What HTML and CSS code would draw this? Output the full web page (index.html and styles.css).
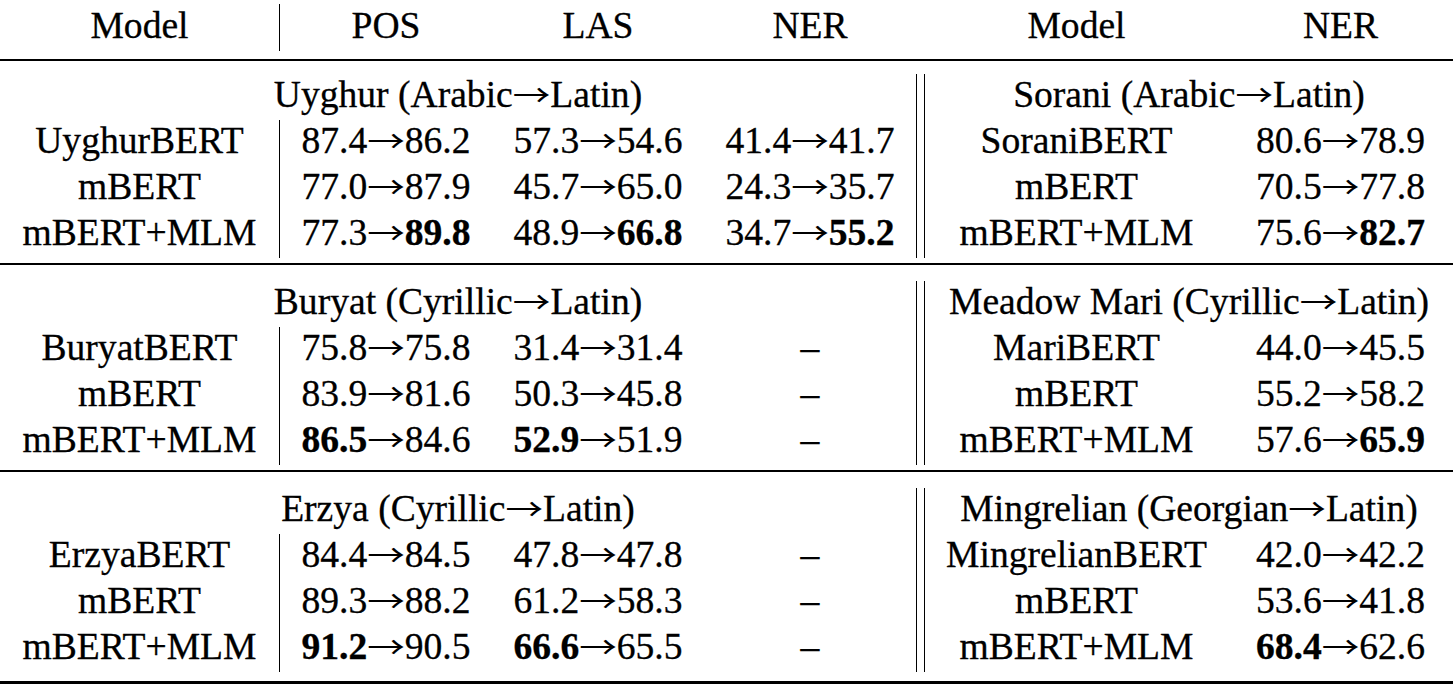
FILE: index.html
```html
<!DOCTYPE html>
<html lang="en">
<head>
    <meta charset="UTF-8">
    <meta name="viewport" content="width=device-width, initial-scale=1.0">
    <title>Transliteration results</title>
    <link rel="stylesheet" href="styles.css">
</head>
<body>
    <table class="results">
        <colgroup>
            <col class="c-model">
            <col class="c-score">
            <col class="c-score">
            <col class="c-score">
            <col class="c-sep">
            <col class="c-model2">
            <col class="c-ner">
        </colgroup>
        <thead>
            <tr>
                <th class="bar">Model</th>
                <th>POS</th>
                <th>LAS</th>
                <th>NER</th>
                <th></th>
                <th>Model</th>
                <th>NER</th>
            </tr>
        </thead>
        <tbody>
            <tr class="rule first"><td colspan="7"><div class="line"></div></td></tr>

            <!-- Uyghur / Sorani -->
            <tr class="lang">
                <td colspan="4">Uyghur (Arabic<span class="arr">→</span>Latin)</td>
                <td class="double"></td>
                <td colspan="2">Sorani (Arabic<span class="arr">→</span>Latin)</td>
            </tr>
            <tr>
                <td class="bar">UyghurBERT</td>
                <td>87.4<span class="arr">→</span>86.2</td>
                <td>57.3<span class="arr">→</span>54.6</td>
                <td>41.4<span class="arr">→</span>41.7</td>
                <td class="double"></td>
                <td>SoraniBERT</td>
                <td>80.6<span class="arr">→</span>78.9</td>
            </tr>
            <tr>
                <td class="bar">mBERT</td>
                <td>77.0<span class="arr">→</span>87.9</td>
                <td>45.7<span class="arr">→</span>65.0</td>
                <td>24.3<span class="arr">→</span>35.7</td>
                <td class="double"></td>
                <td>mBERT</td>
                <td>70.5<span class="arr">→</span>77.8</td>
            </tr>
            <tr>
                <td class="bar">mBERT+MLM</td>
                <td>77.3<span class="arr">→</span><b>89.8</b></td>
                <td>48.9<span class="arr">→</span><b>66.8</b></td>
                <td>34.7<span class="arr">→</span><b>55.2</b></td>
                <td class="double"></td>
                <td>mBERT+MLM</td>
                <td>75.6<span class="arr">→</span><b>82.7</b></td>
            </tr>

            <tr class="rule"><td colspan="7"><div class="line"></div></td></tr>

            <!-- Buryat / Meadow Mari -->
            <tr class="lang">
                <td colspan="4">Buryat (Cyrillic<span class="arr">→</span>Latin)</td>
                <td class="double"></td>
                <td colspan="2">Meadow Mari (Cyrillic<span class="arr">→</span>Latin)</td>
            </tr>
            <tr>
                <td class="bar">BuryatBERT</td>
                <td>75.8<span class="arr">→</span>75.8</td>
                <td>31.4<span class="arr">→</span>31.4</td>
                <td>–</td>
                <td class="double"></td>
                <td>MariBERT</td>
                <td>44.0<span class="arr">→</span>45.5</td>
            </tr>
            <tr>
                <td class="bar">mBERT</td>
                <td>83.9<span class="arr">→</span>81.6</td>
                <td>50.3<span class="arr">→</span>45.8</td>
                <td>–</td>
                <td class="double"></td>
                <td>mBERT</td>
                <td>55.2<span class="arr">→</span>58.2</td>
            </tr>
            <tr>
                <td class="bar">mBERT+MLM</td>
                <td><b>86.5</b><span class="arr">→</span>84.6</td>
                <td><b>52.9</b><span class="arr">→</span>51.9</td>
                <td>–</td>
                <td class="double"></td>
                <td>mBERT+MLM</td>
                <td>57.6<span class="arr">→</span><b>65.9</b></td>
            </tr>

            <tr class="rule"><td colspan="7"><div class="line"></div></td></tr>

            <!-- Erzya / Mingrelian -->
            <tr class="lang">
                <td colspan="4">Erzya (Cyrillic<span class="arr">→</span>Latin)</td>
                <td class="double"></td>
                <td colspan="2">Mingrelian (Georgian<span class="arr">→</span>Latin)</td>
            </tr>
            <tr>
                <td class="bar">ErzyaBERT</td>
                <td>84.4<span class="arr">→</span>84.5</td>
                <td>47.8<span class="arr">→</span>47.8</td>
                <td>–</td>
                <td class="double"></td>
                <td>MingrelianBERT</td>
                <td>42.0<span class="arr">→</span>42.2</td>
            </tr>
            <tr>
                <td class="bar">mBERT</td>
                <td>89.3<span class="arr">→</span>88.2</td>
                <td>61.2<span class="arr">→</span>58.3</td>
                <td>–</td>
                <td class="double"></td>
                <td>mBERT</td>
                <td>53.6<span class="arr">→</span>41.8</td>
            </tr>
            <tr>
                <td class="bar">mBERT+MLM</td>
                <td><b>91.2</b><span class="arr">→</span>90.5</td>
                <td><b>66.6</b><span class="arr">→</span>65.5</td>
                <td>–</td>
                <td class="double"></td>
                <td>mBERT+MLM</td>
                <td><b>68.4</b><span class="arr">→</span>62.6</td>
            </tr>

            <tr class="rule bottom"><td colspan="7"><div class="line"></div></td></tr>
        </tbody>
    </table>
</body>
</html>
```

FILE: styles.css
```css
body {
    margin: 0;
    padding-top: 4px;
    background: #fff;
    color: #000;
    font-family: "Liberation Serif", "Times New Roman", serif;
    font-size: 37.6px;
    -webkit-text-stroke: 0.3px #000;
}

.results {
    width: 1453px;
    table-layout: fixed;
    border-collapse: separate;
    border-spacing: 0;
}

.c-model { width: 280px; }
.c-score { width: 212px; }
.c-sep { width: 9px; }
.c-model2 { width: 303px; }
.c-ner { width: 225px; }

th, td {
    font-weight: normal;
    text-align: center;
    white-space: nowrap;
    line-height: 42px;
    padding: 0 0 4px;
}

thead th {
    line-height: 43px;
}

b {
    font-weight: bold;
}

/* arrow like LaTeX \rightarrow: a full 1em, thin, on the math axis */
.arr {
    display: inline-block;
    font-family: "Noto Sans CJK SC", sans-serif;
    font-weight: normal;
    line-height: 0;
    vertical-align: -2px;
    transform: scaleY(0.8);
    -webkit-text-stroke: 0;
}

.bar {
    border-right: 1px solid #000;
}

.double {
    border-left: 1px solid #000;
    border-right: 1px solid #000;
}

/* booktabs-like rules */
.rule td {
    padding: 5px 0 16px;
    line-height: 0;
}

.rule.first td {
    padding: 8px 0 13px;
}

.rule .line {
    border-top: 2px solid #000;
}

.rule.bottom td {
    padding: 9px 0 0;
}

.rule.bottom .line {
    border-top-width: 3px;
}
```
